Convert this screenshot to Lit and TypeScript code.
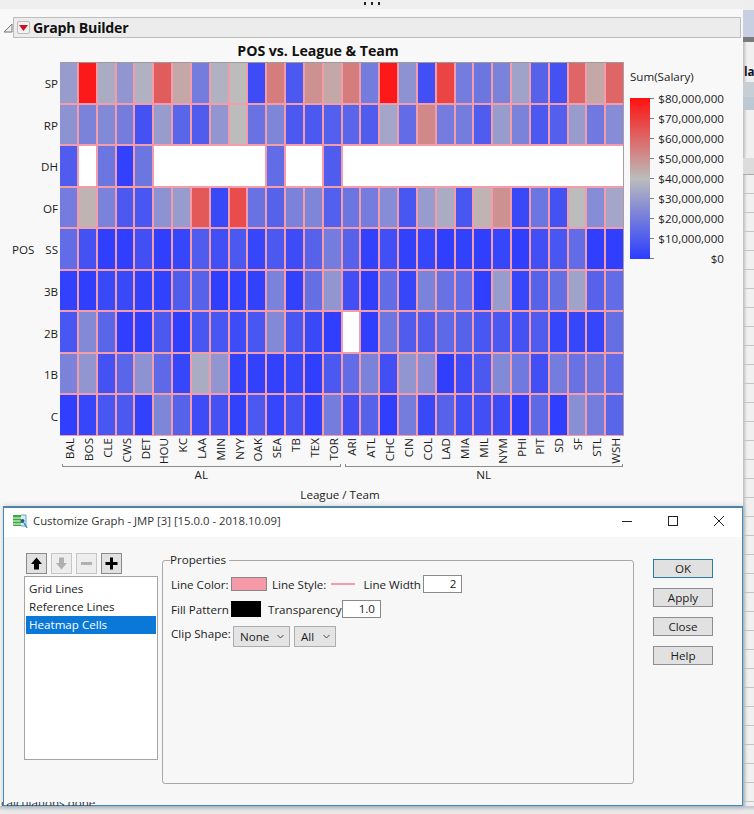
import { LitElement, html, css, svg } from "lit";
import { customElement } from "lit/decorators.js";

const TEAMS_AL = ["BAL","BOS","CLE","CWS","DET","HOU","KC","LAA","MIN","NYY","OAK","SEA","TB","TEX","TOR"];
const TEAMS_NL = ["ARI","ATL","CHC","CIN","COL","LAD","MIA","MIL","NYM","PHI","PIT","SD","SF","STL","WSH"];
const TEAMS = [...TEAMS_AL, ...TEAMS_NL];
const _ = null;
const ROWS: [string, (number | null)[]][] = [
  ["SP", [30,78,35,28,37,62,45,20,37,40,5,55,9,50,45,55,20,78,27,6,68,20,18,22,32,12,7,60,45,60]],
  ["RP", [27,22,24,20,7,30,13,10,28,40,17,23,9,9,11,13,10,33,15,52,20,20,10,30,22,9,11,30,19,25]],
  ["DH", [10,_,18,2,18,_,_,_,_,_,_,15,_,_,10,_,_,_,_,_,_,_,_,_,_,_,_,_,_,_]],
  ["OF", [20,42,22,9,8,27,30,63,4,66,17,12,22,23,11,18,20,25,8,30,35,8,42,50,4,18,7,40,25,33]],
  ["SS", [15,7,1,1,6,1,3,10,6,9,3,9,5,12,20,12,2,6,2,3,1,2,1,3,1,6,8,15,1,1]],
  ["3B", [2,1,4,4,2,2,10,12,1,2,2,22,2,16,28,6,1,15,3,22,17,15,1,30,3,12,16,32,12,15]],
  ["2B", [8,24,13,1,1,9,1,8,8,5,8,24,8,4,1,_,1,18,10,10,14,12,8,9,7,10,3,3,3,16]],
  ["1B", [22,28,7,13,27,14,3,35,28,2,2,2,3,1,9,15,22,6,28,25,1,5,9,24,19,6,20,17,18,15]],
  ["C",  [1,3,8,9,2,23,12,5,7,2,9,3,7,2,20,6,12,1,20,4,12,6,6,5,1,14,1,26,20,13]],
];
const LEGEND = ["$80,000,000","$70,000,000","$60,000,000","$50,000,000","$40,000,000","$30,000,000","$20,000,000","$10,000,000","$0"];

function color(v: number): string {
  const blue = [43, 60, 255], gray = [188, 188, 188], red = [255, 16, 16];
  const t = v / 80;
  const [a, b, k] = t < 0.5 ? [blue, gray, t * 2] : [gray, red, (t - 0.5) * 2];
  const c = a.map((x, i) => Math.round(x + (b[i] - x) * (k as number)));
  return `rgb(${c[0]},${c[1]},${c[2]})`;
}

function runs(vals: (number | null)[]) {
  const out: { v: number | null; span: number }[] = [];
  for (const v of vals) {
    const last = out[out.length - 1];
    if (v === null && last && last.v === null) last.span++;
    else out.push({ v, span: 1 });
  }
  return out;
}

const ARROW_UP = svg`<path d="M7.5 1.5 L13 8 H10 V13.5 H5 V8 H2 Z"/>`;
const ARROW_DOWN = svg`<path d="M5 1.5 H10 V7 H13 L7.5 13.5 L2 7 H5 Z"/>`;
const MINUS = svg`<rect x="2" y="6" width="11" height="3"/>`;
const PLUS = svg`<path d="M6 1.5 H9 V6 H13.5 V9 H9 V13.5 H6 V9 H1.5 V6 H6 Z"/>`;

@customElement("app-root")
export class AppRoot extends LitElement {
  static styles = css`
    :host {
      display: block;
      position: relative;
      width: 754px;
      height: 814px;
      overflow: hidden;
      font-family: "Open Sans", "Noto Sans", sans-serif;
      font-size: 11.6px;
      color: #1c1c1c;
      background: #f2f2f2;
    }
    .desktop { display: flex; height: 814px; }
    .main {
      width: 743px;
      flex: none;
      background: #f8f8f8;
      display: flex;
      flex-direction: column;
    }
    .topstrip {
      height: 9px;
      background: #efefef;
      display: flex;
      justify-content: center;
      gap: 5px;
      padding-top: 2px;
      box-sizing: border-box;
    }
    .topstrip i { width: 2px; height: 3px; background: #222; }
    .outline { display: flex; align-items: center; height: 21px; margin-top: 8px; padding-left: 3px; }
    .disclose { width: 10px; height: 10px; flex: none; }
    .headbar {
      flex: none;
      width: 728px;
      height: 21px;
      box-sizing: border-box;
      background: #ececec;
      border: 1px solid #bdbdbd;
      display: flex;
      align-items: center;
      gap: 3px;
      padding-left: 3px;
    }
    .redbtn {
      width: 13px;
      height: 13px;
      box-sizing: border-box;
      border: 1px solid #bbb;
      border-radius: 2px;
      background: #f4f0f0;
      display: flex;
      align-items: center;
      justify-content: center;
    }
    .headbar b { font-size: 14.2px; font-weight: 700; color: #111; letter-spacing: -0.25px; }
    .title {
      width: 636px;
      text-align: center;
      font-size: 14.2px;
      font-weight: 700;
      color: #111;
      height: 24px;
      line-height: 25px;
      letter-spacing: -0.05px;
    }
    .graph { display: flex; }
    .poscol { width: 36px; padding: 2px 0 0 12px; box-sizing: border-box; flex: none; height: 373px; display: flex; align-items: center; }
    .ylabels {
      width: 24px;
      flex: none;
      margin-top: 2px;
      display: grid;
      grid-template-rows: repeat(9, 1fr);
      row-gap: 2px;
      height: 372px;
    }
    .ylabels span { display: flex; align-items: center; justify-content: flex-end; padding-right: 2px; height: 100%; }
    .plotcol { width: 564px; flex: none; }
    .heat {
      display: grid;
      grid-template-columns: repeat(30, 1fr);
      grid-template-rows: repeat(9, 1fr);
      gap: 2px;
      width: 564px;
      height: 374px;
      box-sizing: border-box;
      background: #f59cab;
      border-top: 1px solid #9c9a9c;
      padding-bottom: 1px;
      border-right: 1px solid #ac9aa4;
    }
    .cell { min-width: 0; }
    .xlabels {
      display: grid;
      grid-template-columns: repeat(30, 1fr);
      column-gap: 2px;
      height: 28px;
      padding: 2px 0 0 2px;
      box-sizing: border-box;
    }
    .xlabels span {
      writing-mode: vertical-rl;
      transform: rotate(180deg);
      align-self: start;
      justify-self: center;
      line-height: 16px;
      white-space: nowrap;
    }
    .brackets { display: flex; gap: 4px; padding: 0 1px 0 2px; }
    .bracket { flex: 1; }
    .bracket div { height: 2px; border: 1px solid #8c8c8c; border-top: none; }
    .bracket span { display: block; text-align: center; line-height: 16px; }
    .axis { text-align: center; margin-top: 4px; line-height: 16px; padding-right: 4px; }
    .legend { margin-left: 6px; flex: none; width: 100px; }
    .legend .name { height: 29px; line-height: 16px; margin-top: 7px; }
    .scale { display: flex; }
    .bar {
      width: 20px;
      height: 161px;
      background: linear-gradient(#ff1010, #bcbcbc 50%, #2b3cff);
      flex: none;
    }
    .ticks { display: flex; flex-direction: column; justify-content: space-between; height: 161px; width: 4px; flex: none; }
    .ticks i { display: block; height: 1px; background: #7a7f90; }
    .tlabels { width: 70px; height: 161px; display: flex; flex-direction: column; justify-content: space-between; align-items: flex-end; }
    .tlabels span { height: 1px; line-height: 1px; }
    .side { flex: 1; min-width: 0; background: linear-gradient(90deg, #bdbdbd, #f0f0f0 4px); overflow: hidden; }
    .band1 { height: 10px; background: #eee; }
    .band2 { height: 27px; background: #c9cfe2; }
    .band3 { height: 5px; background: #7a7a7a; }
    .band4 { height: 40px; padding: 22px 0 0 1px; box-sizing: border-box; font-weight: 700; color: #112; white-space: nowrap; line-height: 16px; overflow: hidden; }
    .band5 { height: 15px; background: #c6ced6; }
    .band6 { height: 13px; background: #bcc8d2; }
    .band7 { height: 48px; }
    .band8 { height: 17px; background: #dcdcdc; border-bottom: 1px solid #aaa; box-sizing: border-box; }
    .line { height: 19px; border-bottom: 1px solid #c4c4c4; box-sizing: border-box; }

    .dialog {
      position: absolute;
      left: 3px;
      top: 506px;
      width: 740px;
      height: 300px;
      box-sizing: border-box;
      border: 1px solid #3f8ac0;
      border-top: 2px solid #4a84a8;
      background: #f7f7f7;
      display: flex;
      flex-direction: column;
      box-shadow: 0 0 6px rgba(0,0,0,.18);
    }
    .titlebar {
      height: 29px;
      padding: 0 0 4px 8px;
      box-sizing: border-box;
      flex: none;
      background: #fff;
      display: flex;
      align-items: center;
      font-size: 11.35px;
      color: #333;
    }
    .titlebar .appicon { margin-right: 5px; flex: none; }
    .titlebar .ttl { flex: 1; }
    .winbtn { width: 46px; height: 25px; display: flex; align-items: center; justify-content: center; flex: none; }
    .dbody { display: flex; padding-left: 20px; flex: 1; }
    .leftcol { width: 134px; flex: none; padding-top: 16px; }
    .tools { display: flex; gap: 4px; padding-left: 2px; height: 23px; }
    .tool {
      width: 21px;
      height: 21px;
      box-sizing: border-box;
      border: 1px solid #8a8a8a;
      background: #e1e1e1;
      display: flex;
      align-items: center;
      justify-content: center;
      fill: #000;
    }
    .tool.off { border-color: #c6c6c6; background: #ededed; fill: #b0b0b0; }
    .list {
      box-sizing: border-box;
      height: 184px;
      border: 1px solid #a5a5a5;
      background: #fff;
      padding: 3px 1px;
      color: #222;
    }
    .list div { height: 18px; line-height: 18px; padding-left: 3px; }
    .list .sel { background: #0a78d7; color: #fff; }
    fieldset {
      margin: 15px 0 0 4px;
      padding: 0 0 0 8px;
      width: 472px;
      height: 232px;
      box-sizing: border-box;
      border: 1px solid #a8a8a8;
      border-radius: 3px;
      flex: none;
    }
    legend { padding: 0 3px 0 0; margin-left: -1px; line-height: 16px; font-size: 11.6px; }
    .prow { display: flex; align-items: center; white-space: nowrap; }
    .prow.r1 { height: 20px; margin-top: 6px; }
    .prow.r2 { height: 20px; margin-top: 5px; }
    .prow.r3 { height: 22px; margin-top: 6px; }
    .plabel { width: 56px; flex: none; }
    .r3 .plabel { width: 57px; margin-bottom: 6px; }
    .swatch { box-sizing: border-box; flex: none; }
    .sw1 { width: 36px; height: 14px; background: #f79aa8; border: 1px solid #888; margin-left: 4px; }
    .sw2 { width: 30px; height: 16px; background: #000; margin-left: 4px; }
    .lbl-style { margin-left: 5px; }
    .lbl-trans { margin-left: 7px; width: 74px; flex: none; }
    .stroke { width: 24px; height: 2px; background: #f59cab; margin: 0 8px 0 5px; flex: none; }
    .lbl-w { width: 60px; flex: none; }
    .input {
      box-sizing: border-box;
      width: 39px;
      height: 18px;
      border: 1px solid #8a8a8a;
      background: #fff;
      text-align: right;
      padding-right: 5px;
      line-height: 16px;
      flex: none;
    }
    .sel-btn {
      box-sizing: border-box;
      height: 21px;
      border: 1px solid #adadad;
      background: #e4e4e4;
      display: flex;
      align-items: center;
      justify-content: space-between;
      padding: 1px 5px 0 6px;
    }
    .sel-none { width: 57px; margin-left: 5px; }
    .sel-all { width: 42px; margin-left: 4px; }
    .btncol { width: 60px; margin-left: 19px; flex: none; padding-top: 22px; display: flex; flex-direction: column; gap: 10px; }
    .btn {
      box-sizing: border-box;
      height: 19px;
      border: 1px solid #8e8e8e;
      background: #e1e1e1;
      text-align: center;
      line-height: 17px;
    }
    .btn.def { border-color: #2f7ba8; }
    .status {
      position: absolute;
      left: 1px;
      top: 802px;
      height: 4px;
      overflow: hidden;
      line-height: 2px;
      color: #333;
      white-space: nowrap;
    }
    .footer { position: absolute; left: 0; right: 0; top: 806px; height: 8px; background: linear-gradient(#bfc3c8, #e8eaec 5px); }
  `;

  render() {
    return html`
      <div class="desktop">
        <div class="main">
          <div class="topstrip"><i></i><i></i><i></i></div>
          <div class="outline">
            <svg class="disclose" viewBox="0 0 10 10"><path d="M9 1 V9 H1 Z" fill="#eee" stroke="#777"/></svg>
            <div class="headbar">
              <span class="redbtn"><svg width="9" height="6" viewBox="0 0 9 6"><path d="M0 0 H9 L4.5 6 Z" fill="#c8102e"/></svg></span>
              <b>Graph Builder</b>
            </div>
          </div>
          <div class="title">POS vs. League &amp; Team</div>
          <div class="graph">
            <div class="poscol">POS</div>
            <div class="ylabels">${ROWS.map(([n]) => html`<span>${n}</span>`)}</div>
            <div class="plotcol">
              <div class="heat">
                ${ROWS.map(([, vals]) => runs(vals).map((r) => html`<div
                    class="cell"
                    style="grid-column: span ${r.span}; background: ${r.v === null ? "#fff" : color(r.v)}"
                  ></div>`))}
              </div>
              <div class="xlabels">${TEAMS.map((t) => html`<span>${t}</span>`)}</div>
              <div class="brackets">
                <div class="bracket"><div></div><span>AL</span></div>
                <div class="bracket"><div></div><span>NL</span></div>
              </div>
              <div class="axis">League / Team</div>
            </div>
            <div class="legend">
              <div class="name">Sum(Salary)</div>
              <div class="scale">
                <div class="bar"></div>
                <div class="ticks">${LEGEND.map(() => html`<i></i>`)}</div>
                <div class="tlabels">${LEGEND.map((l) => html`<span>${l}</span>`)}</div>
              </div>
            </div>
          </div>
        </div>
        <div class="side">
          <div class="band1"></div><div class="band2"></div><div class="band3"></div>
          <div class="band4">lar</div>
          <div class="band5"></div><div class="band6"></div><div class="band7"></div><div class="band8"></div>
          ${Array.from({ length: 34 }, () => html`<div class="line"></div>`)}
        </div>
      </div>
      <div class="footer"></div>

      <div class="dialog">
        <div class="titlebar">
          <svg class="appicon" width="16" height="16" viewBox="0 0 16 16">
            <rect x="1" y="2" width="9" height="11" fill="#3aa83a"/>
            <path d="M1 5 H10 M1 8 H10 M1 11 H10" stroke="#fff" stroke-width="1"/>
            <path d="M9 2 H14 V13 H9" fill="#dfeaf2" stroke="#6f9fbf"/>
            <circle cx="10.5" cy="8" r="2" fill="#1f5f8f"/>
            <path d="M12 10 L15 15" stroke="#2a8fd0" stroke-width="1.4"/>
          </svg>
          <span class="ttl">Customize Graph - JMP [3] [15.0.0 - 2018.10.09]</span>
          <span class="winbtn"><svg width="12" height="12" viewBox="0 0 12 12"><path d="M1 6.5 H11" stroke="#222"/></svg></span>
          <span class="winbtn"><svg width="12" height="12" viewBox="0 0 12 12"><rect x="1.5" y="1.5" width="9" height="9" fill="none" stroke="#222"/></svg></span>
          <span class="winbtn"><svg width="12" height="12" viewBox="0 0 12 12"><path d="M1 1 L11 11 M11 1 L1 11" stroke="#222"/></svg></span>
        </div>
        <div class="dbody">
          <div class="leftcol">
            <div class="tools">
              <span class="tool"><svg width="15" height="15" viewBox="0 0 15 15">${ARROW_UP}</svg></span>
              <span class="tool off"><svg width="15" height="15" viewBox="0 0 15 15">${ARROW_DOWN}</svg></span>
              <span class="tool off"><svg width="15" height="15" viewBox="0 0 15 15">${MINUS}</svg></span>
              <span class="tool"><svg width="15" height="15" viewBox="0 0 15 15">${PLUS}</svg></span>
            </div>
            <div class="list">
              <div>Grid Lines</div>
              <div>Reference Lines</div>
              <div class="sel">Heatmap Cells</div>
            </div>
          </div>
          <fieldset>
            <legend>Properties</legend>
            <div class="prow r1">
              <span class="plabel">Line Color:</span><span class="swatch sw1"></span>
              <span class="lbl-style">Line Style:</span><span class="stroke"></span>
              <span class="lbl-w">Line Width</span><span class="input">2</span>
            </div>
            <div class="prow r2">
              <span class="plabel">Fill Pattern</span><span class="swatch sw2"></span>
              <span class="lbl-trans">Transparency</span><span class="input">1.0</span>
            </div>
            <div class="prow r3">
              <span class="plabel">Clip Shape:</span>
              <span class="sel-btn sel-none">None<svg width="7" height="5" viewBox="0 0 7 5"><path d="M0.5 1 L3.5 4 L6.5 1" fill="none" stroke="#444"/></svg></span>
              <span class="sel-btn sel-all">All<svg width="7" height="5" viewBox="0 0 7 5"><path d="M0.5 1 L3.5 4 L6.5 1" fill="none" stroke="#444"/></svg></span>
            </div>
          </fieldset>
          <div class="btncol">
            <div class="btn def">OK</div>
            <div class="btn">Apply</div>
            <div class="btn">Close</div>
            <div class="btn">Help</div>
          </div>
        </div>
      </div>
      <div class="status">calculations done</div>
    `;
  }
}
